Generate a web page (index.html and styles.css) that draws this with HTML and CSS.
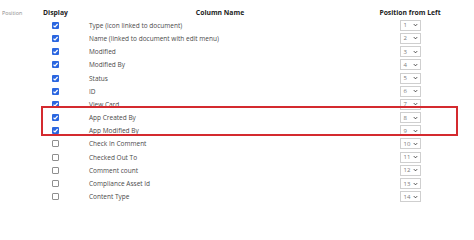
FILE: index.html
```html
<!DOCTYPE html>
<html>
<head>
<meta charset="utf-8">
<link rel="stylesheet" href="styles.css">
</head>
<body>
<div class="page">
  <div class="grid">
    <div class="row head">
      <div class="c-pos"><span class="pos-label">Position</span></div>
      <div class="c-disp">Display</div>
      <div class="c-name">Column Name</div>
      <div class="c-order">Position from Left</div>
    </div>
    <div class="row"><div class="c-pos"></div><div class="c-disp"><span class="cb on"><svg viewBox="0 0 7 7"><path d="M1.5 3.7 L3 5 L5.6 2" /></svg></span></div><div class="c-name left">Type (icon linked to document)</div><div class="c-order"><span class="sel">1<svg viewBox="0 0 6 4"><path d="M1 1 L3 3 L5 1"/></svg></span></div></div>
    <div class="row"><div class="c-pos"></div><div class="c-disp"><span class="cb on"><svg viewBox="0 0 7 7"><path d="M1.5 3.7 L3 5 L5.6 2" /></svg></span></div><div class="c-name left">Name (linked to document with edit menu)</div><div class="c-order"><span class="sel">2<svg viewBox="0 0 6 4"><path d="M1 1 L3 3 L5 1"/></svg></span></div></div>
    <div class="row"><div class="c-pos"></div><div class="c-disp"><span class="cb on"><svg viewBox="0 0 7 7"><path d="M1.5 3.7 L3 5 L5.6 2" /></svg></span></div><div class="c-name left">Modified</div><div class="c-order"><span class="sel">3<svg viewBox="0 0 6 4"><path d="M1 1 L3 3 L5 1"/></svg></span></div></div>
    <div class="row"><div class="c-pos"></div><div class="c-disp"><span class="cb on"><svg viewBox="0 0 7 7"><path d="M1.5 3.7 L3 5 L5.6 2" /></svg></span></div><div class="c-name left">Modified By</div><div class="c-order"><span class="sel">4<svg viewBox="0 0 6 4"><path d="M1 1 L3 3 L5 1"/></svg></span></div></div>
    <div class="row"><div class="c-pos"></div><div class="c-disp"><span class="cb on"><svg viewBox="0 0 7 7"><path d="M1.5 3.7 L3 5 L5.6 2" /></svg></span></div><div class="c-name left">Status</div><div class="c-order"><span class="sel">5<svg viewBox="0 0 6 4"><path d="M1 1 L3 3 L5 1"/></svg></span></div></div>
    <div class="row"><div class="c-pos"></div><div class="c-disp"><span class="cb on"><svg viewBox="0 0 7 7"><path d="M1.5 3.7 L3 5 L5.6 2" /></svg></span></div><div class="c-name left">ID</div><div class="c-order"><span class="sel">6<svg viewBox="0 0 6 4"><path d="M1 1 L3 3 L5 1"/></svg></span></div></div>
    <div class="row"><div class="c-pos"></div><div class="c-disp"><span class="cb on"><svg viewBox="0 0 7 7"><path d="M1.5 3.7 L3 5 L5.6 2" /></svg></span></div><div class="c-name left">View Card</div><div class="c-order"><span class="sel">7<svg viewBox="0 0 6 4"><path d="M1 1 L3 3 L5 1"/></svg></span></div></div>
    <div class="row"><div class="c-pos"></div><div class="c-disp"><span class="cb on"><svg viewBox="0 0 7 7"><path d="M1.5 3.7 L3 5 L5.6 2" /></svg></span></div><div class="c-name left">App Created By</div><div class="c-order"><span class="sel">8<svg viewBox="0 0 6 4"><path d="M1 1 L3 3 L5 1"/></svg></span></div></div>
    <div class="row"><div class="c-pos"></div><div class="c-disp"><span class="cb on"><svg viewBox="0 0 7 7"><path d="M1.5 3.7 L3 5 L5.6 2" /></svg></span></div><div class="c-name left">App Modified By</div><div class="c-order"><span class="sel">9<svg viewBox="0 0 6 4"><path d="M1 1 L3 3 L5 1"/></svg></span></div></div>
    <div class="row"><div class="c-pos"></div><div class="c-disp"><span class="cb"></span></div><div class="c-name left">Check In Comment</div><div class="c-order"><span class="sel">10<svg viewBox="0 0 6 4"><path d="M1 1 L3 3 L5 1"/></svg></span></div></div>
    <div class="row"><div class="c-pos"></div><div class="c-disp"><span class="cb"></span></div><div class="c-name left">Checked Out To</div><div class="c-order"><span class="sel">11<svg viewBox="0 0 6 4"><path d="M1 1 L3 3 L5 1"/></svg></span></div></div>
    <div class="row"><div class="c-pos"></div><div class="c-disp"><span class="cb"></span></div><div class="c-name left">Comment count</div><div class="c-order"><span class="sel">12<svg viewBox="0 0 6 4"><path d="M1 1 L3 3 L5 1"/></svg></span></div></div>
    <div class="row"><div class="c-pos"></div><div class="c-disp"><span class="cb"></span></div><div class="c-name left">Compliance Asset Id</div><div class="c-order"><span class="sel">13<svg viewBox="0 0 6 4"><path d="M1 1 L3 3 L5 1"/></svg></span></div></div>
    <div class="row"><div class="c-pos"></div><div class="c-disp"><span class="cb"></span></div><div class="c-name left">Content Type</div><div class="c-order"><span class="sel">14<svg viewBox="0 0 6 4"><path d="M1 1 L3 3 L5 1"/></svg></span></div></div>
  </div>
  <div class="highlight"></div>
</div>
</body>
</html>
```

FILE: styles.css
```css
html, body {
  margin: 0;
  padding: 0;
  background: #ffffff;
}
.page {
  position: relative;
  width: 474px;
  height: 203px;
  overflow: hidden;
  font-family: "Open Sans", "Noto Sans", sans-serif;
  color: #4a4a4a;
}
.grid {
  padding-top: 5.5px;
}
.row {
  display: grid;
  grid-template-columns: 41px 29px 300px 80px;
  height: 13.2px;
  align-items: center;
  font-size: 6.5px;
}
.head {
  font-weight: 700;
  color: #222222;
  font-size: 6.8px;
}
.c-disp, .c-name, .c-order {
  text-align: center;
  white-space: nowrap;
}
.c-disp {
  display: flex;
  justify-content: center;
}
.c-name.left {
  text-align: left;
  padding-left: 19px;
}
.c-order {
  display: flex;
  justify-content: center;
}
.pos-label {
  font-weight: 400;
  font-size: 5.4px;
  color: #8a8a8a;
  padding-left: 2px;
}
.cb {
  box-sizing: border-box;
  width: 7px;
  height: 7px;
  border-radius: 1px;
  border: 1px solid #8f8f8f;
  background: #ffffff;
  display: block;
}
.cb.on {
  border: none;
  background: #2a66e0;
}
.cb svg {
  display: block;
  width: 7px;
  height: 7px;
}
.cb svg path {
  fill: none;
  stroke: #ffffff;
  stroke-width: 1.2;
}
.sel {
  box-sizing: border-box;
  width: 21px;
  height: 11px;
  border: 1px solid #cfcfcf;
  display: flex;
  align-items: center;
  justify-content: space-between;
  padding: 0 2px 0 3px;
  font-size: 6px;
  color: #7a7a7a;
  background: #ffffff;
}
.sel svg {
  width: 5px;
  height: 4px;
}
.sel svg path {
  fill: none;
  stroke: #444444;
  stroke-width: 1.2;
}
.highlight {
  position: absolute;
  left: 41px;
  top: 106px;
  width: 417px;
  height: 30px;
  box-sizing: border-box;
  border: 2px solid #d42a2f;
}
```
